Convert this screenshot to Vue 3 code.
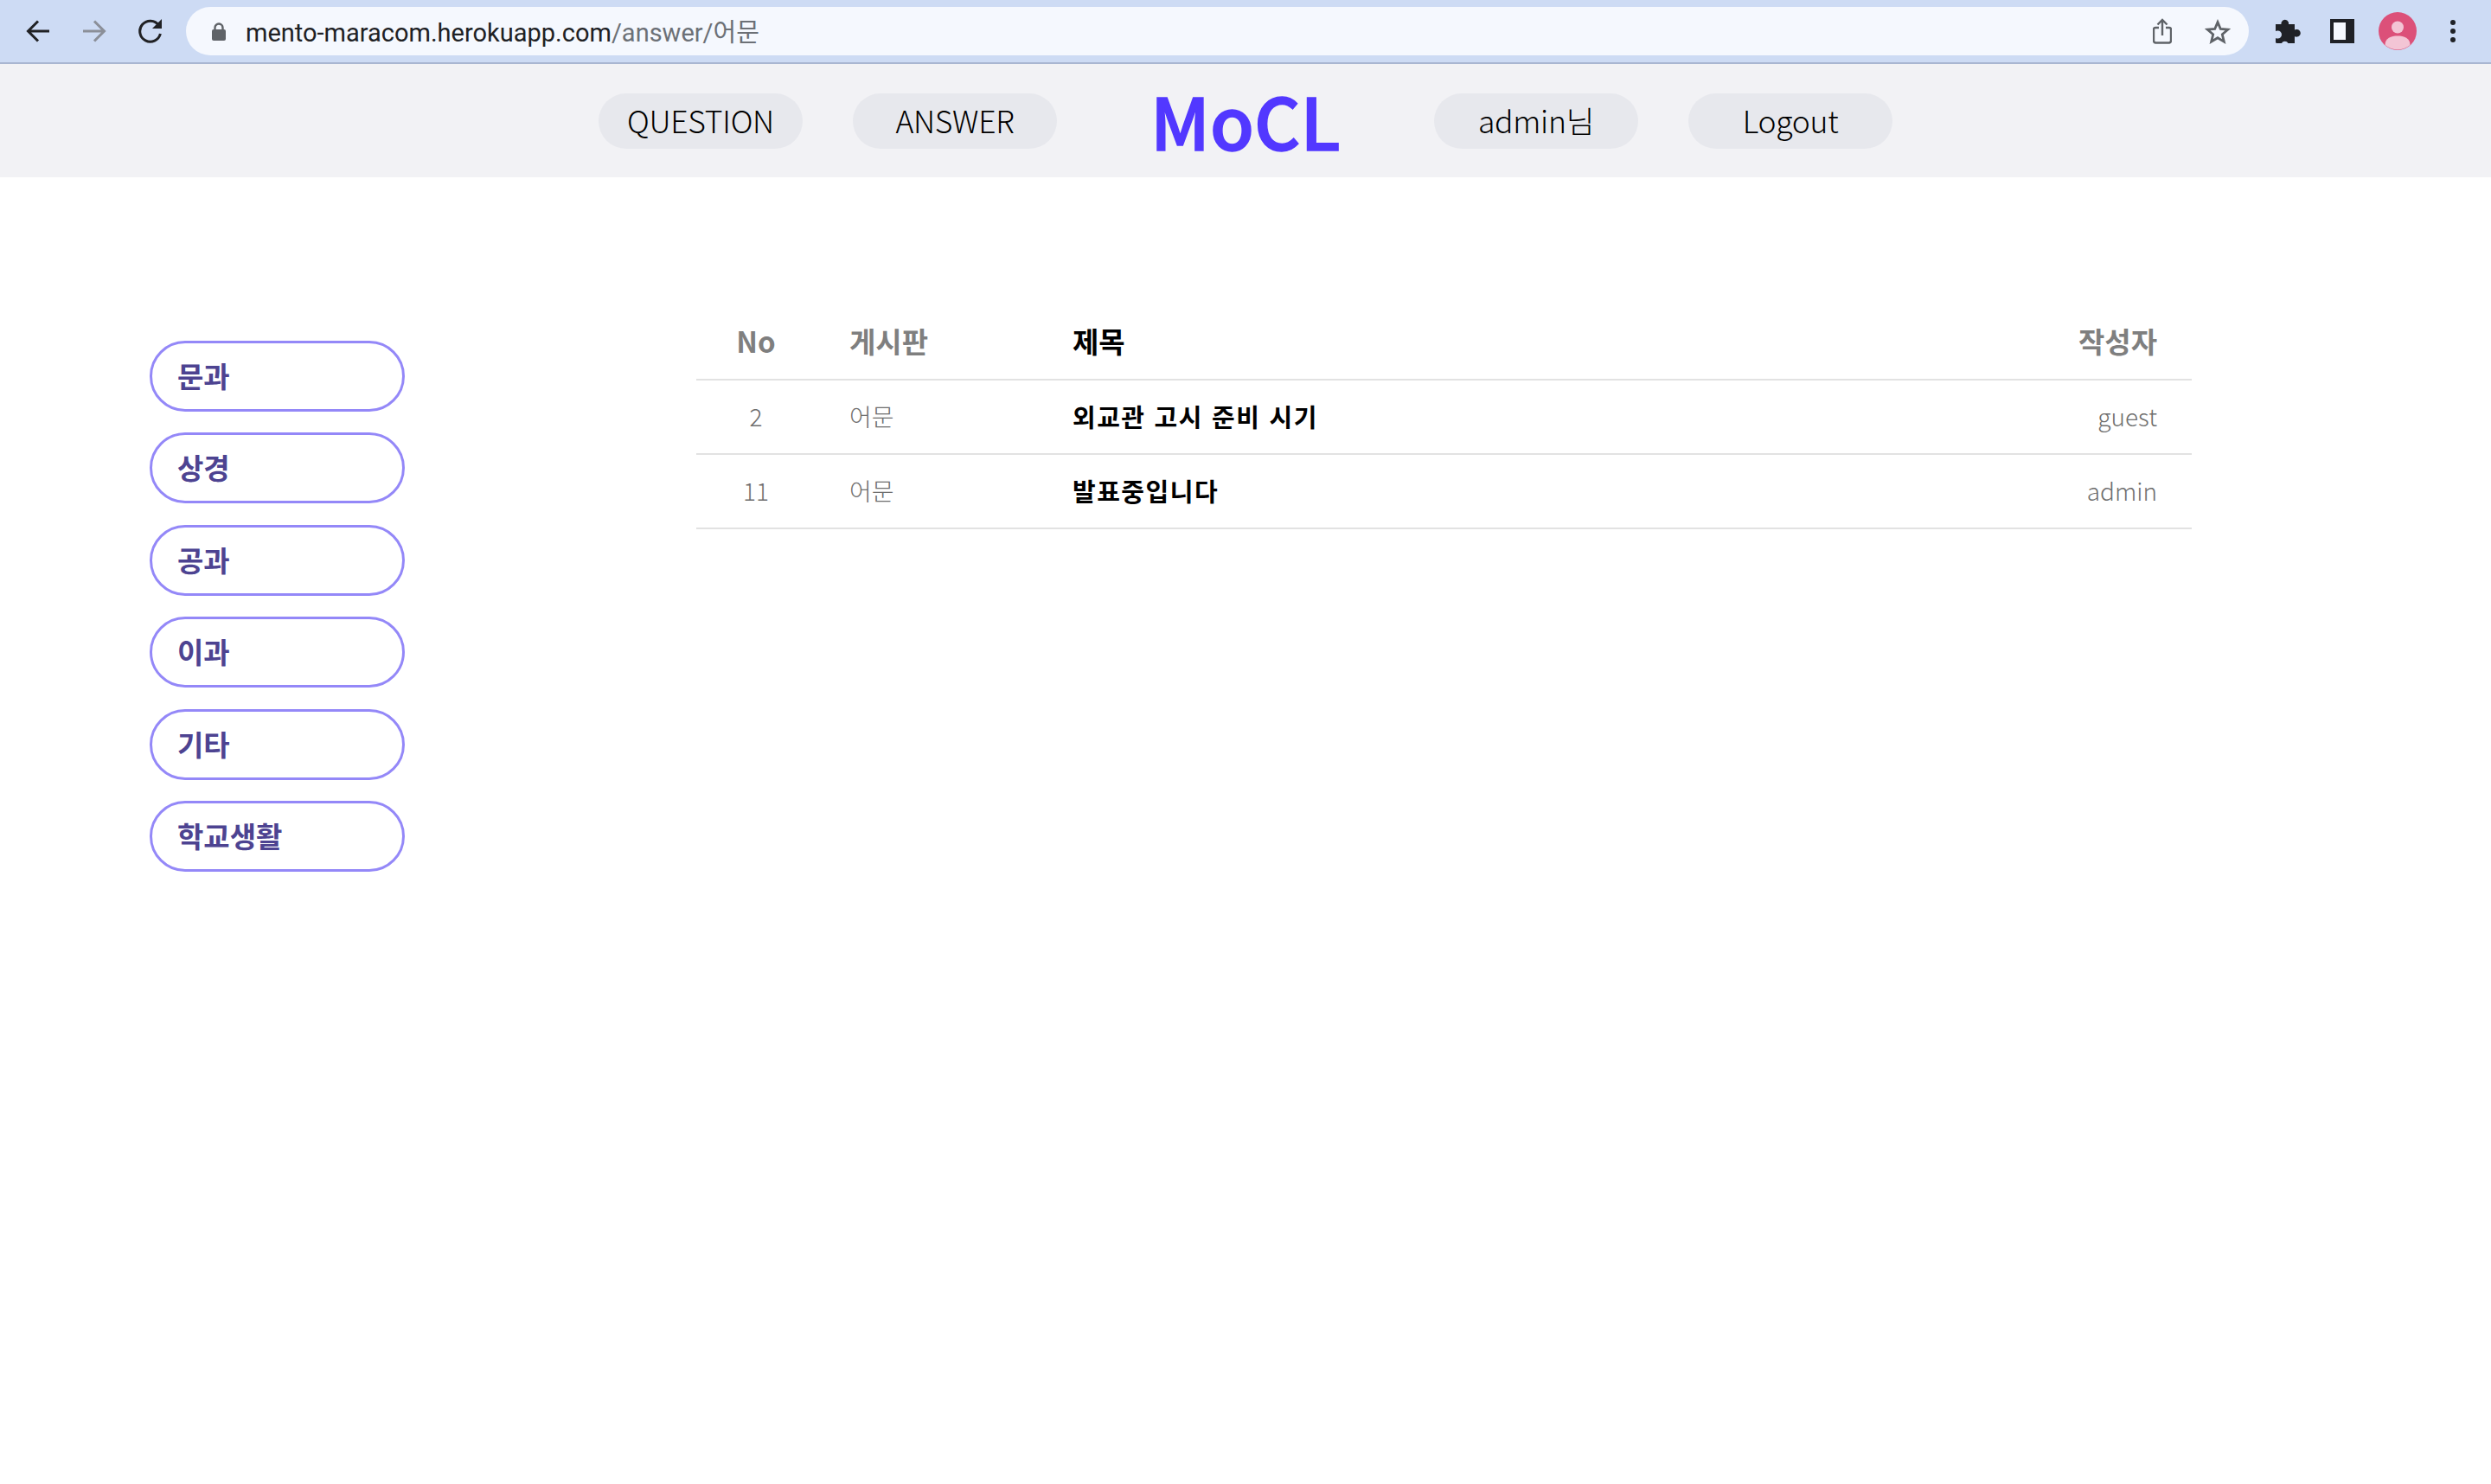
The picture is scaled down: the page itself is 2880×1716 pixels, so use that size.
<script setup>
const nav = [
  { key: 'q', label: 'QUESTION' },
  { key: 'a', label: 'ANSWER' },
  { key: 'logo', label: 'MoCL', logo: true },
  { key: 'u', label: 'admin님' },
  { key: 'l', label: 'Logout' }
]
const categories = ['문과', '상경', '공과', '이과', '기타', '학교생활']
const rows = [
  { no: 2, board: '어문', title: '외교관 고시 준비 시기', author: 'guest' },
  { no: 11, board: '어문', title: '발표중입니다', author: 'admin' }
]
</script>

<template>
  <div class="page">
    <div class="chrome">
      <svg class="ic back" width="28" height="26" viewBox="0 0 28 26" fill="none" stroke="#202124" stroke-width="3">
        <path d="M27 13H3M14 1.5 2.5 13 14 24.5" />
      </svg>
      <svg class="ic fwd" width="28" height="26" viewBox="0 0 28 26" fill="none" stroke="#8b8f98" stroke-width="3">
        <path d="M1 13h24M14 1.5 25.5 13 14 24.5" />
      </svg>
      <svg class="ic reload" width="30" height="28" viewBox="0 0 30 28">
        <path d="M24.5 7.2A12 12 0 1 0 26.4 17" fill="none" stroke="#202124" stroke-width="3" />
        <path d="M28 0v11H17z" fill="#202124" />
      </svg>
      <div class="omni">
        <svg class="lock" width="18" height="21" viewBox="0 0 18 21">
          <path d="M4.5 9V6a4.5 4.5 0 0 1 9 0v3" fill="none" stroke="#5f6368" stroke-width="2.4" />
          <rect x="1" y="8" width="16" height="13" rx="2" fill="#5f6368" />
        </svg>
        <span class="url">mento-maracom.herokuapp.com<span class="path">/answer/어문</span></span>
        <svg class="share" width="22" height="30" viewBox="0 0 22 30" fill="none" stroke="#5f6368" stroke-width="2.4">
          <path d="M7 11H3a2 2 0 0 0-2 2v13a2.500 2.500 0 0 0 2 2.500h16a2.500 2.500 0 0 0 2-2.500V13a2 2 0 0 0-2-2h-4" />
          <path d="M11 20V2M5.500 7.500 11 2l5.500 5.500" />
        </svg>
        <svg class="star" width="30" height="29" viewBox="0 0 30 29" fill="none" stroke="#5f6368" stroke-width="2.800">
          <path d="m15 3.600 3.300 7.900 8.500.7-6.500 5.600 2 8.300L15 21.700 7.700 26.100l2-8.300-6.500-5.600 8.500-.7z" />
        </svg>
      </div>
      <svg class="puzzle" width="30" height="30" viewBox="0 0 30 30">
        <path fill="#1f2126" d="M1 7h6.500a4.300 4.300 0 0 1 .3-2.500 4.300 4.300 0 0 1 8 0 4.300 4.300 0 0 1 .2 2.500h7v6.500a4 4 0 0 1 2.500-.5 4.300 4.300 0 0 1 0 8.600 4 4 0 0 1-2.500-.5V29H15.500a4.300 4.300 0 0 0-7.600 0H2.500A1.500 1.500 0 0 1 1 27.500v-4.500a4 4 0 0 0 2.500.5 4.500 4.500 0 0 0 0-9A4 4 0 0 0 1 15z" />
      </svg>
      <div class="panel"></div>
      <svg class="avatar" width="44" height="44" viewBox="0 0 44 44">
        <circle cx="22" cy="22" r="22" fill="#dc5079" />
        <circle cx="22" cy="17.500" r="7" fill="#f3c5d5" />
        <path d="M7.500 38c0-8 7-10.500 14.500-10.500S36.500 30 36.500 38A22 22 0 0 1 7.500 38z" fill="#f3c5d5" />
      </svg>
      <div class="dots"><i></i><i></i><i></i></div>
    </div>

    <header class="site-head">
      <template v-for="item in nav" :key="item.key">
        <a v-if="item.logo" class="logo">{{ item.label }}</a>
        <a v-else class="nav-pill">{{ item.label }}</a>
      </template>
    </header>

    <main class="content">
      <aside class="side">
        <a v-for="c in categories" :key="c" class="cat">{{ c }}</a>
      </aside>
      <table class="board">
        <colgroup>
          <col class="c-no" />
          <col class="c-board" />
          <col />
          <col class="c-author" />
        </colgroup>
        <thead>
          <tr>
            <th class="no">No</th>
            <th class="brd">게시판</th>
            <th class="title">제목</th>
            <th class="author">작성자</th>
          </tr>
        </thead>
        <tbody>
          <tr v-for="r in rows" :key="r.no">
            <td class="no">{{ r.no }}</td>
            <td class="brd">{{ r.board }}</td>
            <td class="title">{{ r.title }}</td>
            <td class="author">{{ r.author }}</td>
          </tr>
        </tbody>
      </table>
    </main>
  </div>
</template>

<style>
html, body { background: #fff; }
</style>

<style scoped>
.page {
  width: 2880px;
  min-height: 1716px;
  background: #fff;
  font-family: "Noto Sans CJK KR", "Noto Sans", sans-serif;
}
.chrome {
  height: 74px;
  box-sizing: border-box;
  background: #cddbf4;
  border-bottom: 2px solid #a9b6d1;
  display: flex;
  align-items: center;
}
.ic { flex: none; }
.back { margin-left: 30px; }
.fwd { margin-left: 37px; }
.reload { margin-left: 36px; }
.omni {
  margin-left: 26px;
  width: 2385px;
  height: 56px;
  border-radius: 28px;
  background: #f5f8fe;
  display: flex;
  align-items: center;
  flex: none;
}
.lock { margin-left: 29px; flex: none; }
.url {
  margin-left: 22px;
  padding-bottom: 2px;
  font-family: Roboto, "Noto Sans CJK KR", sans-serif;
  font-size: 29px;
  color: #202124;
  white-space: nowrap;
}
.path { color: #6c7076; }
.share { margin-left: auto; flex: none; }
.star { margin-left: 38px; margin-right: 21px; flex: none; }
.puzzle { margin-left: 30px; flex: none; }
.panel {
  margin-left: 34px;
  width: 28px;
  height: 28px;
  box-sizing: border-box;
  flex: none;
  border: 4px solid #1f2126;
  border-right-width: 10px;
  background: #f5f8fe;
}
.avatar { margin-left: 28px; flex: none; }
.dots {
  margin-left: 39px;
  display: flex;
  flex-direction: column;
  gap: 4px;
}
.dots i {
  display: block;
  width: 6px;
  height: 6px;
  border-radius: 50%;
  background: #1f2126;
}
.site-head {
  height: 131px;
  background: #f2f2f5;
  display: flex;
  justify-content: center;
  align-items: center;
  gap: 58px;
}
.nav-pill {
  width: 236px;
  height: 64px;
  box-sizing: border-box;
  padding-bottom: 2px;
  border-radius: 32px;
  background: #e7e8ed;
  display: flex;
  align-items: center;
  justify-content: center;
  font-size: 35.5px;
  font-weight: 300;
  letter-spacing: -0.3px;
  color: #000;
}
.logo {
  width: 320px;
  padding-bottom: 4px;
  text-align: center;
  font-size: 83px;
  line-height: 100px;
  font-weight: 500;
  -webkit-text-stroke: 1.5px #5238ff;
  color: #5238ff;
}
.content {
  display: flex;
  align-items: flex-start;
  padding: 148px 0 0 173px;
}
.side {
  width: 295px;
  margin-top: 41px;
  margin-right: 337px;
  display: flex;
  flex-direction: column;
  gap: 24.4px;
  flex: none;
}
.cat {
  height: 82px;
  box-sizing: border-box;
  border: 3px solid #9488f8;
  border-radius: 41px;
  padding: 0 0 2px 29px;
  display: flex;
  align-items: center;
  font-size: 33px;
  font-weight: 700;
  color: #4d4391;
}
.board {
  width: 1729px;
  border-collapse: collapse;
  table-layout: fixed;
}
.c-no { width: 138px; }
.c-board { width: 297px; }
.c-author { width: 300px; }
th, td {
  height: 86px;
  padding: 0 0 2px;
  box-sizing: border-box;
  border-bottom: 2px solid #e2e2e2;
  color: #6e6e6e;
  font-weight: 300;
  text-align: left;
  font-size: 28px;
}
th { font-size: 33px; font-weight: 700; padding-bottom: 3px; color: #7f7f7f; }
.no { text-align: center; }
.brd { padding-left: 39px; }
td.title, th.title { color: #000; font-weight: 700; }
td.title { font-size: 29px; letter-spacing: 1.5px; word-spacing: 2px; }
.author { text-align: right; padding-right: 40px; }
</style>
